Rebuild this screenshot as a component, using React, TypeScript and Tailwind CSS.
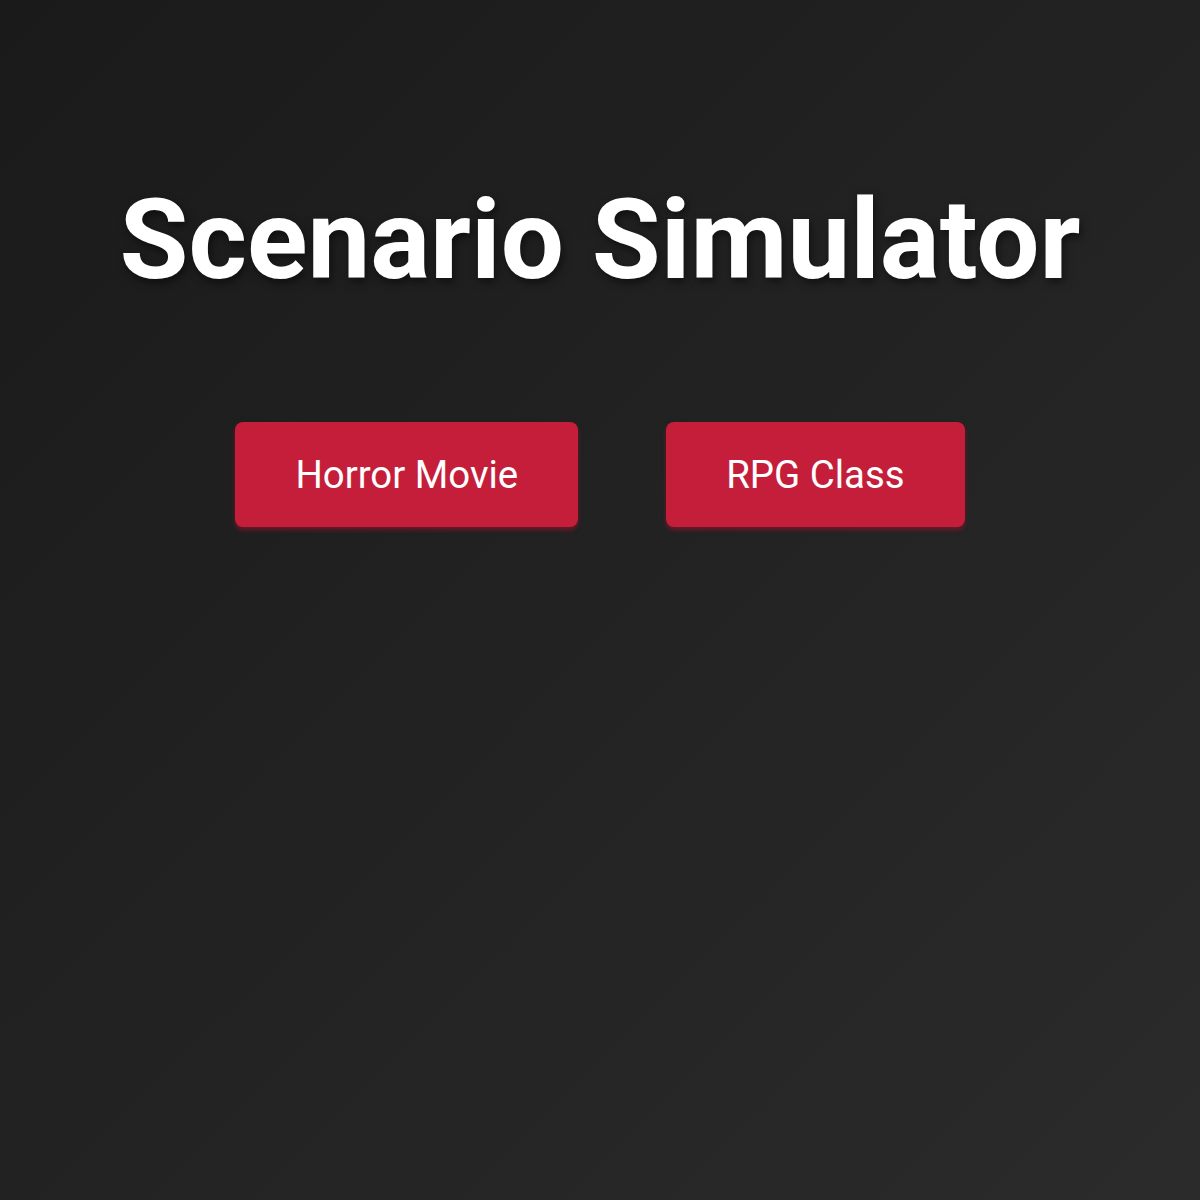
const scenarios = ['Horror Movie', 'RPG Class'];

export default function App() {
  return (
    <div
      className="min-h-[1200px] w-full bg-gradient-to-br from-[#1a1a1a] to-[#2b2b2b] flex flex-col items-center text-white"
      style={{ fontFamily: 'Roboto, "Liberation Sans", sans-serif' }}
    >
      {/* Title */}
      <h1 className="mt-[170px] text-[112px] leading-[140px] font-bold [text-shadow:2px_4px_8px_rgba(0,0,0,0.5)]">
        Scenario Simulator
      </h1>

      {/* Scenario picker */}
      <div className="mt-[112px] flex gap-[88px]">
        {scenarios.map((name) => (
          <button
            key={name}
            className="h-[105px] px-[60px] rounded-lg bg-[#c41e3a] text-[38.4px] text-white shadow-[0_3px_4px_rgba(140,20,40,0.7)]"
          >
            {name}
          </button>
        ))}
      </div>
    </div>
  );
}
